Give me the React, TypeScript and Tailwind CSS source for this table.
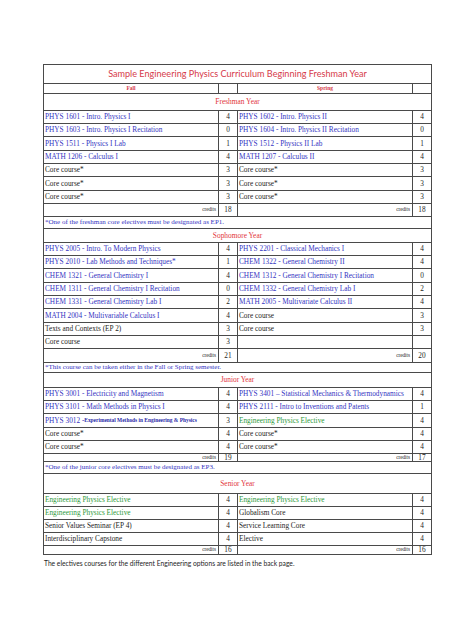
import React from "react";

type Col = "blue" | "black" | "green";
type Item = { t: React.ReactNode; c: string; col: Col } | null;

const colorCls: Record<Col, string> = {
  blue: "text-[#3434c2]",
  black: "text-[#1e1e1e]",
  green: "text-[#2f9a3c]",
};

const serif = "font-['Liberation_Serif','Times_New_Roman',serif]";

function CourseCell({ item, first }: { item: Item; first?: boolean }) {
  return (
    <div
      className={`flex items-center pl-[1px] overflow-hidden whitespace-nowrap leading-none text-[7.3px] ${serif} ${
        first ? "" : "border-l border-[#4a4a4a]"
      } ${item ? colorCls[item.col] : ""}`}
    >
      {item ? item.t : ""}
    </div>
  );
}

function CreditCell({ v }: { v: string }) {
  return (
    <div
      className={`flex items-center justify-center border-l border-[#4a4a4a] leading-none text-[7.3px] text-[#1e1e1e] ${serif}`}
    >
      <span className="text-[#1e1e1e]">{v}</span>
    </div>
  );
}

function CreditsRow({ h, a, b }: { h: string; a: string; b: string }) {
  return (
    <div className={`grid grid-cols-[174px_19px_175px_19px] border-t border-[#4a4a4a] overflow-hidden ${h}`}>
      <div className={`flex items-center justify-end pr-[2px] leading-none text-[5.2px] text-[#1e1e1e] ${serif}`}>
        credits
      </div>
      <CreditCell v={a} />
      <div className={`border-l border-[#4a4a4a] flex items-center justify-end pr-[2px] leading-none text-[5.2px] text-[#1e1e1e] ${serif}`}>
        credits
      </div>
      <CreditCell v={b} />
    </div>
  );
}

function CourseRow({ h, l, r }: { h: string; l: Item; r: Item }) {
  return (
    <div className={`grid grid-cols-[174px_19px_175px_19px] border-t border-[#4a4a4a] ${h}`}>
      <CourseCell item={l} first />
      <CreditCell v={l ? l.c : ""} />
      <CourseCell item={r} />
      <CreditCell v={r ? r.c : ""} />
    </div>
  );
}

function Heading({ h, text }: { h: string; text: string }) {
  return (
    <div
      className={`flex items-center justify-center border-t border-[#4a4a4a] leading-none text-[7.4px] text-[#e2363c] ${serif} ${h}`}
    >
      {text}
    </div>
  );
}

function Note({ h, text }: { h: string; text: string }) {
  return (
    <div
      className={`flex items-center pl-[1px] border-t border-[#4a4a4a] leading-none text-[7px] text-[#3434c2] whitespace-nowrap ${serif} ${h}`}
    >
      {text}
    </div>
  );
}

const core = (c: string): Item => ({ t: "Core course*", c, col: "black" });
const blue = (t: React.ReactNode, c: string): Item => ({ t, c, col: "blue" });
const black = (t: string, c: string): Item => ({ t, c, col: "black" });
const green = (t: string, c: string): Item => ({ t, c, col: "green" });

const freshman: [string, Item, Item][] = [
  ["h-[13px]", blue("PHYS 1601 - Intro. Physics I", "4"), blue("PHYS 1602 - Intro. Physics II", "4")],
  ["h-[13px]", blue("PHYS 1603 - Intro. Physics I Recitation", "0"), blue("PHYS 1604 - Intro. Physics II Recitation", "0")],
  ["h-[14px]", blue("PHYS 1511 - Physics I Lab", "1"), blue("PHYS 1512 - Physics II Lab", "1")],
  ["h-[13px]", blue("MATH 1206 - Calculus I", "4"), blue("MATH 1207 - Calculus II", "4")],
  ["h-[13px]", core("3"), core("3")],
  ["h-[14px]", core("3"), core("3")],
  ["h-[13px]", core("3"), core("3")],
];

const sophomore: [string, Item, Item][] = [
  ["h-[13px]", blue("PHYS 2005 - Intro. To Modern Physics", "4"), blue("PHYS 2201 - Classical Mechanics I", "4")],
  ["h-[13px]", blue("PHYS 2010 - Lab Methods and Techniques*", "1"), blue("CHEM 1322 - General Chemistry II", "4")],
  ["h-[14px]", blue("CHEM 1321 - General Chemistry I", "4"), blue("CHEM 1312 - General Chemistry I Recitation", "0")],
  ["h-[13px]", blue("CHEM 1311 - General Chemistry I Recitation", "0"), blue("CHEM 1332 - General Chemistry Lab I", "2")],
  ["h-[13px]", blue("CHEM 1331 - General Chemistry Lab I", "2"), blue("MATH 2005 - Multivariate Calculus II", "4")],
  ["h-[14px]", blue("MATH 2004 - Multivariable Calculus I", "4"), black("Core course", "3")],
  ["h-[13px]", black("Texts and Contexts (EP 2)", "3"), black("Core course", "3")],
  ["h-[13px]", black("Core course", "3"), null],
];

const junior: [string, Item, Item][] = [
  ["h-[13px]", blue("PHYS 3001 - Electricity and Magnetism", "4"), blue("PHYS 3401 \u2013 Statistical Mechanics & Thermodynamics", "4")],
  ["h-[13px]", blue("PHYS 3101 - Math Methods in Physics I", "4"), blue("PHYS 2111 - Intro to Inventions and Patents", "1")],
  [
    "h-[14px]",
    blue(
      <>
        PHYS 3012 -{" "}
        <span className="text-[5.4px] font-bold text-[#2a2aa8]">Experimental Methods in Engineering &amp; Physics</span>
      </>,
      "3"
    ),
    green("Engineering Physics Elective", "4"),
  ],
  ["h-[13px]", core("4"), core("4")],
  ["h-[13px]", core("4"), core("4")],
];

const senior: [string, Item, Item][] = [
  ["h-[13px]", green("Engineering Physics Elective", "4"), green("Engineering Physics Elective", "4")],
  ["h-[13px]", green("Engineering Physics Elective", "4"), black("Globalism Core", "4")],
  ["h-[13px]", black("Senior Values Seminar (EP 4)", "4"), black("Service Learning Core", "4")],
  ["h-[13px]", black("Interdisciplinary Capstone", "4"), black("Elective", "4")],
];

export default function App() {
  return (
    <div className="w-[474px] min-h-[632px] bg-white pt-[64px] pl-[43px]">
      <div className="w-[389px] border border-[#4a4a4a]">
        <div className="h-[18px] flex items-center justify-center leading-none text-[9.1px] text-[#d63a4a] font-['Lato','Liberation_Sans',sans-serif]">
          Sample Engineering Physics Curriculum Beginning Freshman Year
        </div>
        <div className="grid grid-cols-[174px_19px_175px_19px] border-t border-[#4a4a4a] h-[10px]">
          <div className={`flex items-center justify-center leading-none text-[5.5px] font-bold text-[#d63a4a] ${serif}`}>Fall</div>
          <div className="border-l border-[#4a4a4a]" />
          <div className={`flex items-center justify-center border-l border-[#4a4a4a] leading-none text-[5.5px] font-bold text-[#d63a4a] ${serif}`}>Spring</div>
          <div className="border-l border-[#4a4a4a]" />
        </div>

        <Heading h="h-[17px]" text="Freshman Year" />
        {freshman.map(([h, l, r], i) => (
          <CourseRow key={"f" + i} h={h} l={l} r={r} />
        ))}
        <CreditsRow h="h-[13px]" a="18" b="18" />
        <Note h="h-[12px]" text="*One of the freshman core electives must be designated as EP1." />

        <Heading h="h-[14px]" text="Sophomore Year" />
        {sophomore.map(([h, l, r], i) => (
          <CourseRow key={"s" + i} h={h} l={l} r={r} />
        ))}
        <CreditsRow h="h-[14px]" a="21" b="20" />
        <Note h="h-[10px]" text="*This course can be taken either in the Fall or Spring semester." />

        <Heading h="h-[15px]" text="Junior Year" />
        {junior.map(([h, l, r], i) => (
          <CourseRow key={"j" + i} h={h} l={l} r={r} />
        ))}
        <CreditsRow h="h-[8px]" a="19" b="17" />
        <Note h="h-[12px]" text="*One of the junior core electives must be designated as EP3." />

        <Heading h="h-[20px]" text="Senior Year" />
        {senior.map(([h, l, r], i) => (
          <CourseRow key={"n" + i} h={h} l={l} r={r} />
        ))}
        <CreditsRow h="h-[9px]" a="16" b="16" />
      </div>
      <div className="mt-[4px] pl-[1px] leading-[8px] text-[6.7px] text-[#1e1e1e] whitespace-nowrap font-['Lato','Liberation_Sans',sans-serif]">
        The electives courses for the different Engineering options are listed in the back page.
      </div>
    </div>
  );
}
